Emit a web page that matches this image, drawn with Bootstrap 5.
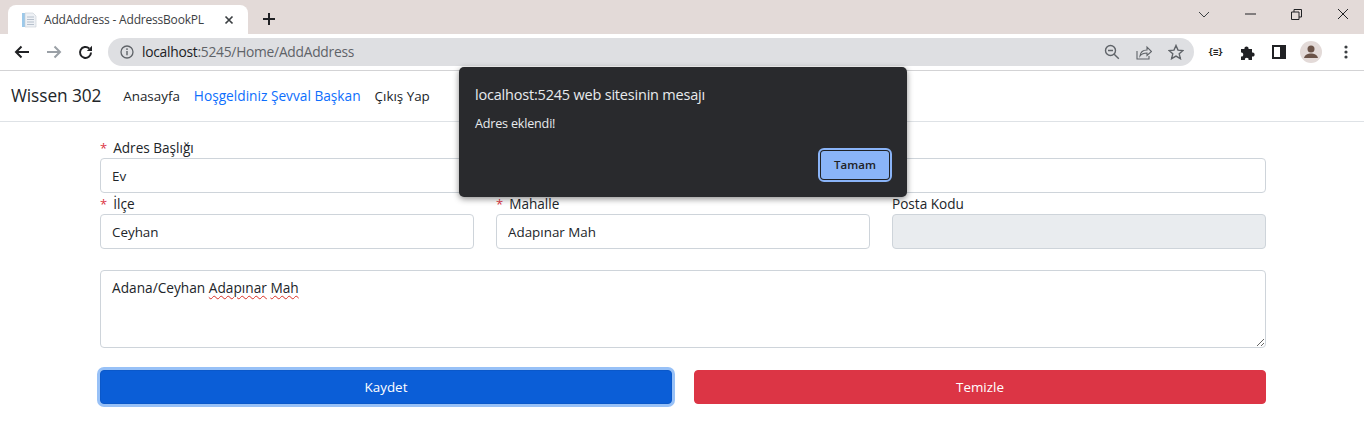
<!DOCTYPE html>
<html lang="tr">
<head>
<meta charset="utf-8">
<title>AddAddress - AddressBookPL</title>
<link href="https://cdn.jsdelivr.net/npm/bootstrap@5.3.0/dist/css/bootstrap.min.css" rel="stylesheet">
<style>
html,body{height:424px;overflow:hidden;background:#fff}
body{font-family:"Open Sans","Noto Sans",sans-serif;font-size:14px;color:#212529;position:relative}
.tabstrip{height:34px;background:#e3dad8;padding-left:8px}
.chrome-tab{width:240px;height:29px;margin-top:5px;background:#fff;border-radius:8px 8px 0 0;padding:0 14px 0 13px;font-size:12px;color:#3c4043}
.tab-title{width:180px;margin-left:7px;letter-spacing:-.2px}
.newtab{margin-left:14px}
.winctl{margin-left:auto;padding-right:15px;margin-bottom:6px}
.winctl svg+svg{margin-left:35px}
.toolbar{height:37px;background:#fff;border-bottom:1px solid #d3d3d5;padding:0 0 0 14px}
.navicons{gap:16px;width:94px}
.omnibox{width:1086px;height:28px;background:#dedfe2;border-radius:14px;padding:0 10px 0 12px;font-size:13.8px;color:#5f6368;letter-spacing:-.26px}
.omnibox b{font-weight:400;color:#202124}
.omni-url{margin-left:8px}
.omni-tools{margin-left:auto;gap:16px}
.ext-tools{margin-left:14px;gap:16px}
.json-ext{font:700 9px "DejaVu Sans Mono",monospace;color:#222;letter-spacing:-.5px;width:16px}
.avatar{width:22px;height:22px;border-radius:50%;background:#e3dad8;overflow:hidden;margin:0 6px 0 -2px}
.site-nav{height:51px;padding:0 11px;border-bottom:1px solid #dee2e6;--bs-navbar-nav-link-padding-x:7px}
.site-brand{font-size:17.3px;color:#212529;text-decoration:none;margin-right:15px;letter-spacing:-.1px}
.site-nav .nav-link{padding-top:0;padding-bottom:0;font-size:13.4px;color:#212529}
.site-nav .nav-link.welcome{color:#0d6efd;font-size:13.7px}
.form-wrap{width:1166px;margin-left:100px;padding-top:15px}
.form-wrap .row{--bs-gutter-x:22px;--bs-gutter-y:0}
.field-label{display:block;height:21px;font-size:13.6px;line-height:21px;color:#212529;margin:0}
.req{color:#dc3545;margin-right:6px;font-size:13px}
.form-wrap .form-control{height:35px;font-size:13.4px;padding:6px 11px;border-color:#ced4da;color:#212529;border-radius:4px}
.form-wrap .form-control[disabled]{background:#e9ecef}
.form-wrap .note-box.form-control{height:78px;margin-top:21px;resize:vertical;overflow:auto;font-size:13.7px;line-height:22px}
.squiggle{text-decoration:underline wavy #d93025 1px;text-underline-offset:2px}
.actions{margin-top:22px}
.actions .btn{height:34px;font-size:13.4px;padding:0;border-radius:4px;font-weight:500}
.btn-save{background:#0b5ed7;border-color:#0a58ca;color:#fff;box-shadow:0 0 0 3px #98c1f7}
.btn-clear{background:#dc3545;border-color:#dc3545;color:#fff}
.alert-dialog{position:absolute;left:459px;top:67px;width:448px;height:130px;background:#292a2d;border-radius:5px;box-shadow:0 2px 6px rgba(0,0,0,.45);color:#e8eaed;padding:18px 16px;letter-spacing:-.2px}
.alert-head{font-size:14.5px;line-height:20px}
.alert-body{font-size:12.6px;line-height:18px;margin-top:10px;color:#e8eaed}
.alert-ok{position:absolute;right:16px;top:82px;width:72px;height:32px;background:#8ab4f8;color:#202124;border:2px solid #202124;outline:2px solid #8ab4f8;outline-offset:-1px;border-radius:5px;font-size:11.5px;font-weight:600;padding:0}
</style>
</head>
<body>
<div class="tabstrip d-flex">
  <div class="chrome-tab d-flex align-items-center">
    <svg width="16" height="16" viewBox="0 0 16 16"><rect x="1" y="1" width="3" height="14" fill="#9cc9ea"/><path d="M4 1h8l3 3v11H4z" fill="#eef1f5" stroke="#c6ccd4" stroke-width=".6"/><path d="M6 5h7M6 7.5h7M6 10h7M6 12.5h7" stroke="#b6c0cc" stroke-width="1"/></svg>
    <span class="tab-title text-nowrap">AddAddress - AddressBookPL</span>
    <svg width="10" height="10" viewBox="0 0 10 10" class="ms-auto"><path d="M1.5 1.5l7 7M8.5 1.5l-7 7" stroke="#3c4043" stroke-width="1.7"/></svg>
  </div>
  <svg class="newtab align-self-center mt-1" width="14" height="14" viewBox="0 0 14 14"><path d="M7 1v12M1 7h12" stroke="#202124" stroke-width="2"/></svg>
  <div class="winctl d-flex align-items-center">
    <svg width="12" height="7" viewBox="0 0 12 7"><path d="M1 1l5 5 5-5" fill="none" stroke="#3c4043" stroke-width="1"/></svg>
    <svg width="11" height="2" viewBox="0 0 11 2"><path d="M0 1h11" stroke="#202124" stroke-width="1"/></svg>
    <svg width="11" height="11" viewBox="0 0 11 11"><path d="M.5 3h7.5v7.5H.5zM3 3V.5h7.5V8H8" fill="none" stroke="#202124" stroke-width="1"/></svg>
    <svg width="12" height="12" viewBox="0 0 12 12"><path d="M1 1l10 10M11 1L1 11" stroke="#202124" stroke-width="1"/></svg>
  </div>
</div>
<div class="toolbar d-flex align-items-center">
  <div class="navicons d-flex align-items-center">
    <svg width="16" height="14" viewBox="0 0 16 14" class="flex-shrink-0"><path d="M15 7H2M7.500 1.500L2 7l5.500 5.500" fill="none" stroke="#202124" stroke-width="2"/></svg>
    <svg width="16" height="14" viewBox="0 0 16 14" class="flex-shrink-0"><path d="M1 7h13M8.500 1.500L14 7l-5.500 5.500" fill="none" stroke="#9aa0a6" stroke-width="2"/></svg>
    <svg width="15" height="15" viewBox="0 0 15 15" class="flex-shrink-0"><path d="M13 7.500A5.500 5.500 0 1 1 11.200 3.400" fill="none" stroke="#202124" stroke-width="2"/><path d="M14 .8v5.200H8.800z" fill="#202124"/></svg>
  </div>
  <div class="omnibox d-flex align-items-center">
    <svg width="14" height="14" viewBox="0 0 14 14" class="flex-shrink-0"><circle cx="7" cy="7" r="6" fill="none" stroke="#5f6368" stroke-width="1.300"/><path d="M7 6v4.200" stroke="#5f6368" stroke-width="1.400"/><circle cx="7" cy="4.100" r=".9" fill="#5f6368"/></svg>
    <span class="omni-url"><b>localhost</b>:5245/Home/AddAddress</span>
    <div class="omni-tools d-flex align-items-center">
      <svg width="16" height="16" viewBox="0 0 16 16"><circle cx="6.500" cy="6.500" r="5" fill="none" stroke="#5f6368" stroke-width="1.400"/><path d="M4 6.500h5M10.200 10.200l4.600 4.600" stroke="#5f6368" stroke-width="1.400"/></svg>
      <svg width="16" height="16" viewBox="0 0 16 16"><path d="M1 7v8h12v-3" fill="none" stroke="#5f6368" stroke-width="1.100"/><path d="M4 12c.5-4 3.500-6 7-6V3l4.500 4.500L11 11.500V9c-3 0-5.500 1-7 3z" fill="none" stroke="#5f6368" stroke-width="1.100"/></svg>
      <svg width="16" height="16" viewBox="0 0 16 16"><path d="M8 1.500l2 4.600 5 .4-3.800 3.300 1.200 4.900L8 12.100l-4.400 2.600 1.200-4.900L1 6.500l5-.4z" fill="none" stroke="#5f6368" stroke-width="1.400"/></svg>
    </div>
  </div>
  <div class="ext-tools d-flex align-items-center">
    <span class="json-ext text-nowrap">{≡}</span>
    <svg width="16" height="16" viewBox="0 0 16 16"><path d="M1 5h3.500c-1-3.500 5-3.500 4 0H12v3.500c3.500-1 3.500 5 0 4V16H8.500c1-3-4.500-3-3.500 0H1v-3.500c3 1 3-5 0-4z" fill="#202124"/></svg>
    <svg width="14" height="14" viewBox="0 0 14 14"><rect x="1" y="1" width="12" height="12" fill="#fff" stroke="#202124" stroke-width="2"/><rect x="8" y="1" width="5" height="12" fill="#202124"/></svg>
    <span class="avatar d-flex justify-content-center flex-shrink-0"><svg width="22" height="22" viewBox="0 0 22 22"><circle cx="11" cy="8" r="3.500" fill="#6b5348"/><path d="M4 17c1-3.500 4-4.500 7-4.500s6 1 7 4.500z" fill="#6b5348"/></svg></span>
    <svg width="4" height="14" viewBox="0 0 4 14"><circle cx="2" cy="2" r="1.600" fill="#3c4043"/><circle cx="2" cy="7" r="1.600" fill="#3c4043"/><circle cx="2" cy="12" r="1.600" fill="#3c4043"/></svg>
  </div>
</div>
<nav class="site-nav navbar navbar-expand d-flex justify-content-start align-items-center flex-nowrap">
  <a class="site-brand" href="#">Wissen 302</a>
  <ul class="navbar-nav flex-row">
    <li class="nav-item"><a class="nav-link" href="#">Anasayfa</a></li>
    <li class="nav-item"><a class="nav-link welcome" href="#">Hoşgeldiniz Şevval Başkan</a></li>
    <li class="nav-item"><a class="nav-link" href="#">Çıkış Yap</a></li>
  </ul>
</nav>
<form class="form-wrap">
  <div class="row">
    <div class="col-4"><label class="field-label"><span class="req">*</span>Adres Başlığı</label><input class="form-control" value="Ev"></div>
    <div class="col-4"><label class="field-label"><span class="req">*</span>İl</label><input class="form-control" value="Adana"></div>
    <div class="col-4"><label class="field-label"></label><input class="form-control" value=""></div>
  </div>
  <div class="row">
    <div class="col-4"><label class="field-label"><span class="req">*</span>İlçe</label><input class="form-control" value="Ceyhan"></div>
    <div class="col-4"><label class="field-label"><span class="req">*</span>Mahalle</label><input class="form-control" value="Adapınar Mah"></div>
    <div class="col-4"><label class="field-label">Posta Kodu</label><input class="form-control" disabled></div>
  </div>
  <div class="row">
    <div class="col-12"><div class="note-box form-control">Adana/Ceyhan <span class="squiggle">Adapınar</span> <span class="squiggle">Mah</span></div></div>
  </div>
  <div class="row actions">
    <div class="col-6"><button type="button" class="btn btn-save w-100">Kaydet</button></div>
    <div class="col-6"><button type="button" class="btn btn-clear w-100">Temizle</button></div>
  </div>
</form>
<div class="alert-dialog" role="alertdialog">
  <div class="alert-head">localhost:5245 web sitesinin mesajı</div>
  <div class="alert-body">Adres eklendi!</div>
  <button type="button" class="alert-ok">Tamam</button>
</div>
</body>
</html>
